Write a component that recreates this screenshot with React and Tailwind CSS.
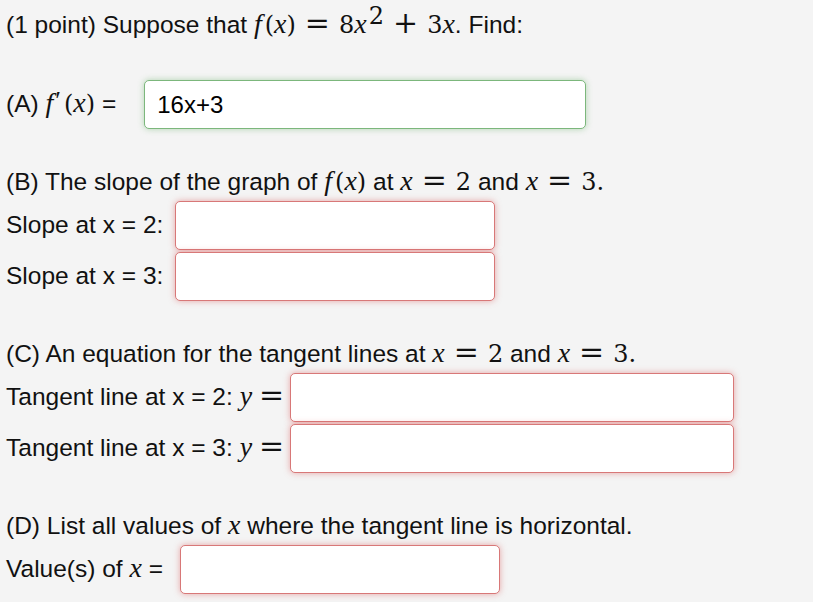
import React from 'react'

const sans = "font-['Liberation_Sans',Arial,sans-serif]"

// italic variables (Times-like italic has the curly x)
function V({ children, className = '' }) {
  return <span className={`font-['Liberation_Serif','Times_New_Roman',serif] italic text-[28px] leading-none ${className}`}>{children}</span>
}
// upright digits and brackets
function N({ children, className = '' }) {
  return <span className={`font-['DejaVu_Serif','Liberation_Serif',serif] text-[24px] leading-none ${className}`}>{children}</span>
}
// relations and operators, drawn wide like TeX
function Op({ children, className = 'mx-[9px]' }) {
  return <span className={`font-['DejaVu_Serif','Liberation_Serif',serif] text-[30px] leading-none ${className}`}>{children}</span>
}

function Box({ w, ok, value }) {
  const tone = ok
    ? 'border-[#7cb77c] shadow-[0_0_6px_rgba(92,170,92,0.45)]'
    : 'border-[#d87878] shadow-[0_0_6px_rgba(220,90,90,0.5)]'
  return (
    <div className={`h-[49px] ${w} shrink-0 bg-white border rounded-[5px] ${tone} flex items-center px-[12px] text-[24px] text-black`}>
      {value}
    </div>
  )
}

const Line = ({ children, className = '' }) => (
  <div className={`h-[36px] leading-[34px] whitespace-nowrap ${className}`}>{children}</div>
)

export default function App() {
  return (
    <div className={`min-h-[602px] w-[813px] bg-[#f4f4f4] text-[#111] ${sans} text-[24.5px] pl-[6px] pt-[8px]`}>
      {/* header */}
      <Line>
        <span>(1 point) Suppose that </span>
        <V className="mr-[3px]">f</V><N>(</N><V>x</V><N>)</N>
        <Op>=</Op>
        <N>8</N><V>x</V><N className="relative -top-[9px] text-[18px] ml-[2px]">2</N>
        <Op className="mx-[9px]">+</Op>
        <N>3</N><V>x</V><span>. Find:</span>
      </Line>

      {/* A */}
      <div className="mt-[36px] flex items-center whitespace-nowrap">
        <span className="mr-[28px]">
          <span>(A) </span>
          <V>f</V><span className="font-['Liberation_Serif',serif] text-[26px] leading-none relative -top-[3px] ml-[2px]">′</span>
          <N className="ml-[3px]">(</N><V>x</V><N>)</N>
          <span> =</span>
        </span>
        <Box w="w-[442px]" ok value="16x+3" />
      </div>

      {/* B */}
      <Line className="mt-[36px]">
        <span>(B) The slope of the graph of </span>
        <V className="mr-[3px]">f</V><N>(</N><V>x</V><N>)</N>
        <span> at </span><V>x</V><Op>=</Op><N>2</N>
        <span> and </span><V>x</V><Op>=</Op><N>3.</N>
      </Line>
      <div className="flex flex-col gap-[2px]">
        {['2', '3'].map(n => (
          <div key={n} className="flex items-center whitespace-nowrap">
            <span className="pr-[12px]">Slope at x = {n}:</span>
            <Box w="w-[320px]" />
          </div>
        ))}
      </div>

      {/* C */}
      <Line className="mt-[36px]">
        <span>(C) An equation for the tangent lines at </span>
        <V>x</V><Op>=</Op><N>2</N>
        <span> and </span><V>x</V><Op>=</Op><N>3.</N>
      </Line>
      <div className="flex flex-col gap-[2px]">
        {['2', '3'].map(n => (
          <div key={n} className="flex items-center whitespace-nowrap">
            <span className="pr-[6px]">
              <span>Tangent line at x = {n}: </span>
              <V>y</V><Op className="ml-[7px]">=</Op>
            </span>
            <Box w="w-[444px]" />
          </div>
        ))}
      </div>

      {/* D */}
      <Line className="mt-[36px]">
        <span>(D) List all values of </span>
        <V>x</V>
        <span> where the tangent line is horizontal.</span>
      </Line>
      <div className="flex items-center whitespace-nowrap">
        <span className="pr-[17px]">
          <span>Value(s) of </span>
          <V>x</V>
          <span> =</span>
        </span>
        <Box w="w-[320px]" />
      </div>
    </div>
  )
}
